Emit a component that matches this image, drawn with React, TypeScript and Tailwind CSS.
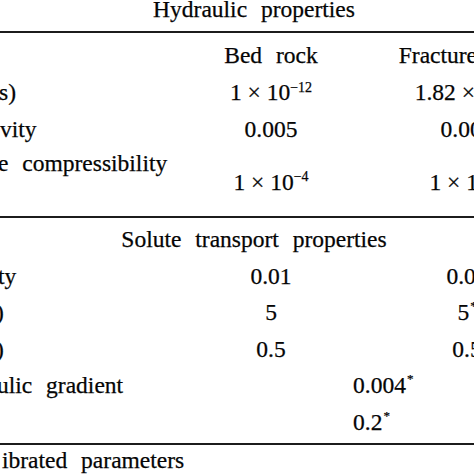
const serif = "font-['Liberation_Serif','Times_New_Roman',serif]";

type Row = {
  label?: string;
  shift?: string;
  bed?: React.ReactNode;
  frac?: React.ReactNode;
};

const Pow = ({ base, exp }: { base: string; exp: string }) => (
  <span>
    {base} × 10<sup className="text-[14px] top-[-0.6em]">{exp}</sup>
  </span>
);

const Star = ({ v }: { v: string }) => (
  <span>
    {v}
    <sup className="text-[13px] top-[-0.75em] ml-[1px]">*</sup>
  </span>
);

const hydraulic: Row[] = [
  { label: 's)', shift: '-ml-[1px]', bed: <Pow base="1" exp="−12" />, frac: <Pow base="1.82" exp="−9" /> },
  { label: 'vity', shift: 'ml-0', bed: '0.005', frac: '0.001' },
];

const solute: Row[] = [
  { label: 'ty', shift: '-ml-[2px]', bed: '0.01', frac: '0.05' },
  { label: ')', shift: '-ml-[4px]', bed: '5', frac: <Star v="5" /> },
  { label: ')', shift: '-ml-[4px]', bed: '0.5', frac: '0.5' },
];

function DataRow({ row }: { row: Row }) {
  return (
    <div className="flex h-[36.5px] leading-[37px] whitespace-nowrap">
      <div className="w-[196px] overflow-hidden [word-spacing:8px]">
        <span className={`inline-block ${row.shift ?? ''}`}>{row.label}</span>
      </div>
      <div className="w-[150px] text-center">{row.bed}</div>
      <div className="w-[242px] text-center">{row.frac}</div>
    </div>
  );
}

export default function App() {
  return (
    <div
      className={`w-[474px] h-[474px] overflow-hidden bg-white text-[#050505] text-[23.5px] [-webkit-text-stroke:0.25px_#050505] ${serif}`}
    >
      <div className="w-[600px]">
        {/* Hydraulic block */}
        <div className="-mt-[9px] h-[40px] leading-[37px] w-[508px] text-center [word-spacing:8px]">
          Hydraulic properties
        </div>
        <div className="h-[2px] bg-[#1c1c1c]" />

        <div className="mt-[4px] flex h-[37px] leading-[37px] whitespace-nowrap [word-spacing:8px]">
          <div className="w-[196px]" />
          <div className="w-[150px] text-center">Bed rock</div>
          <div className="w-[242px] text-center">Fracture zone</div>
        </div>
        {hydraulic.map((r, i) => (
          <div key={i} className="[&>div]:h-[37px]">
            <DataRow row={r} />
          </div>
        ))}
        <div className="flex h-[68px] items-center whitespace-nowrap">
          <div className="w-[196px] self-start overflow-hidden leading-[30px] [word-spacing:8px]">
            <span className="inline-block -ml-[2px]">e compressibility</span>
            <br />
            <span>&nbsp;</span>
          </div>
          <div className="w-[150px] text-center leading-[37px]">
            <Pow base="1" exp="−4" />
          </div>
          <div className="w-[242px] text-center leading-[37px]">
            <Pow base="1" exp="−4" />
          </div>
        </div>
        <div className="h-[2px] bg-[#1c1c1c]" />

        {/* Solute block */}
        <div className="mt-[3px] h-[36.5px] leading-[37px] w-[508px] text-center [word-spacing:8px]">
          Solute transport properties
        </div>
        {solute.map((r, i) => (
          <DataRow key={i} row={r} />
        ))}
        <div className="flex h-[36.5px] leading-[37px] whitespace-nowrap">
          <div className="w-[196px] overflow-hidden [word-spacing:8px]">
            <span className="inline-block -ml-[3px]">ulic gradient</span>
          </div>
          <div className="pl-[157px]">
            <Star v="0.004" />
          </div>
        </div>
        <div className="flex h-[36.5px] leading-[37px] whitespace-nowrap">
          <div className="w-[196px]" />
          <div className="pl-[157px]">
            <Star v="0.2" />
          </div>
        </div>
        <div className="mt-[3px] h-[2px] bg-[#1c1c1c]" />

        <div className="mt-[2px] leading-[26px] whitespace-nowrap [word-spacing:8px]">
          <span className="inline-block ml-[2px]">ibrated parameters</span>
        </div>
      </div>
    </div>
  );
}
